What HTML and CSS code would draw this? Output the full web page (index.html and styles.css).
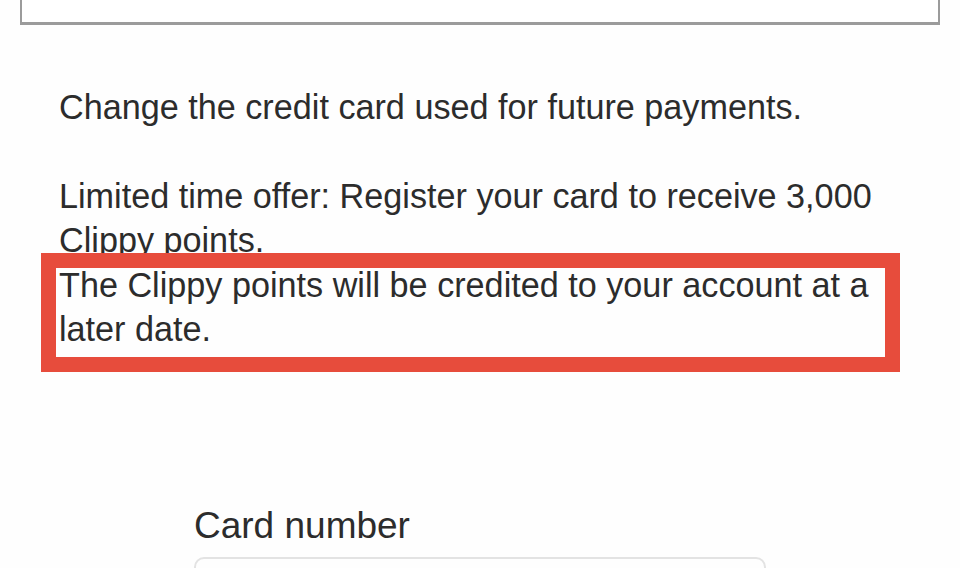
FILE: index.html
```html
<!DOCTYPE html>
<html>
<head>
<meta charset="utf-8">
<link rel="stylesheet" href="styles.css">
</head>
<body>
<div class="page">
  <div class="top-box"></div>
  <div class="content">
    <p class="para">Change the credit card used for future payments.</p>
    <p class="para offer">Limited time offer: Register your card to receive 3,000 Clippy points.<br><span class="highlight">The Clippy points will be credited to your account at a later date.</span></p>
  </div>
  <div class="form">
    <label class="label">Card number</label>
    <div class="input"></div>
  </div>
</div>
</body>
</html>
```
FILE: styles.css
```css
html, body {
  margin: 0;
  padding: 0;
  background: #fefefe;
  overflow: hidden;
}
.page {
  width: 960px;
  height: 568px;
  overflow: hidden;
  font-family: "Liberation Sans", Arial, sans-serif;
  color: #2c2c2c;
}
.top-box {
  margin: -10px 20px 0 20px;
  height: 32px;
  border: 2px solid #9b9b9b;
  border-bottom-width: 3px;
  border-top: none;
  background: #fff;
}
.content {
  padding: 60px 60px 0 59px;
  width: 841px;
  box-sizing: content-box;
}
.para {
  margin: 0 0 44px 0;
  font-size: 34.2px;
  line-height: 44.5px;
}
.offer {
  position: relative;
  width: 825px;
}
.highlight {
  position: relative;
}
.offer::after {
  content: "";
  position: absolute;
  left: -18px;
  top: 79px;
  width: 829px;
  height: 89px;
  border: 15px solid #e74c3c;
}
.form {
  padding: 110px 0 0 194px;
}
.label {
  display: block;
  font-size: 37px;
  line-height: 40px;
  margin-bottom: 11px;
}
.input {
  width: 568px;
  height: 40px;
  border: 2px solid #e3e3e3;
  border-radius: 10px;
}
```
